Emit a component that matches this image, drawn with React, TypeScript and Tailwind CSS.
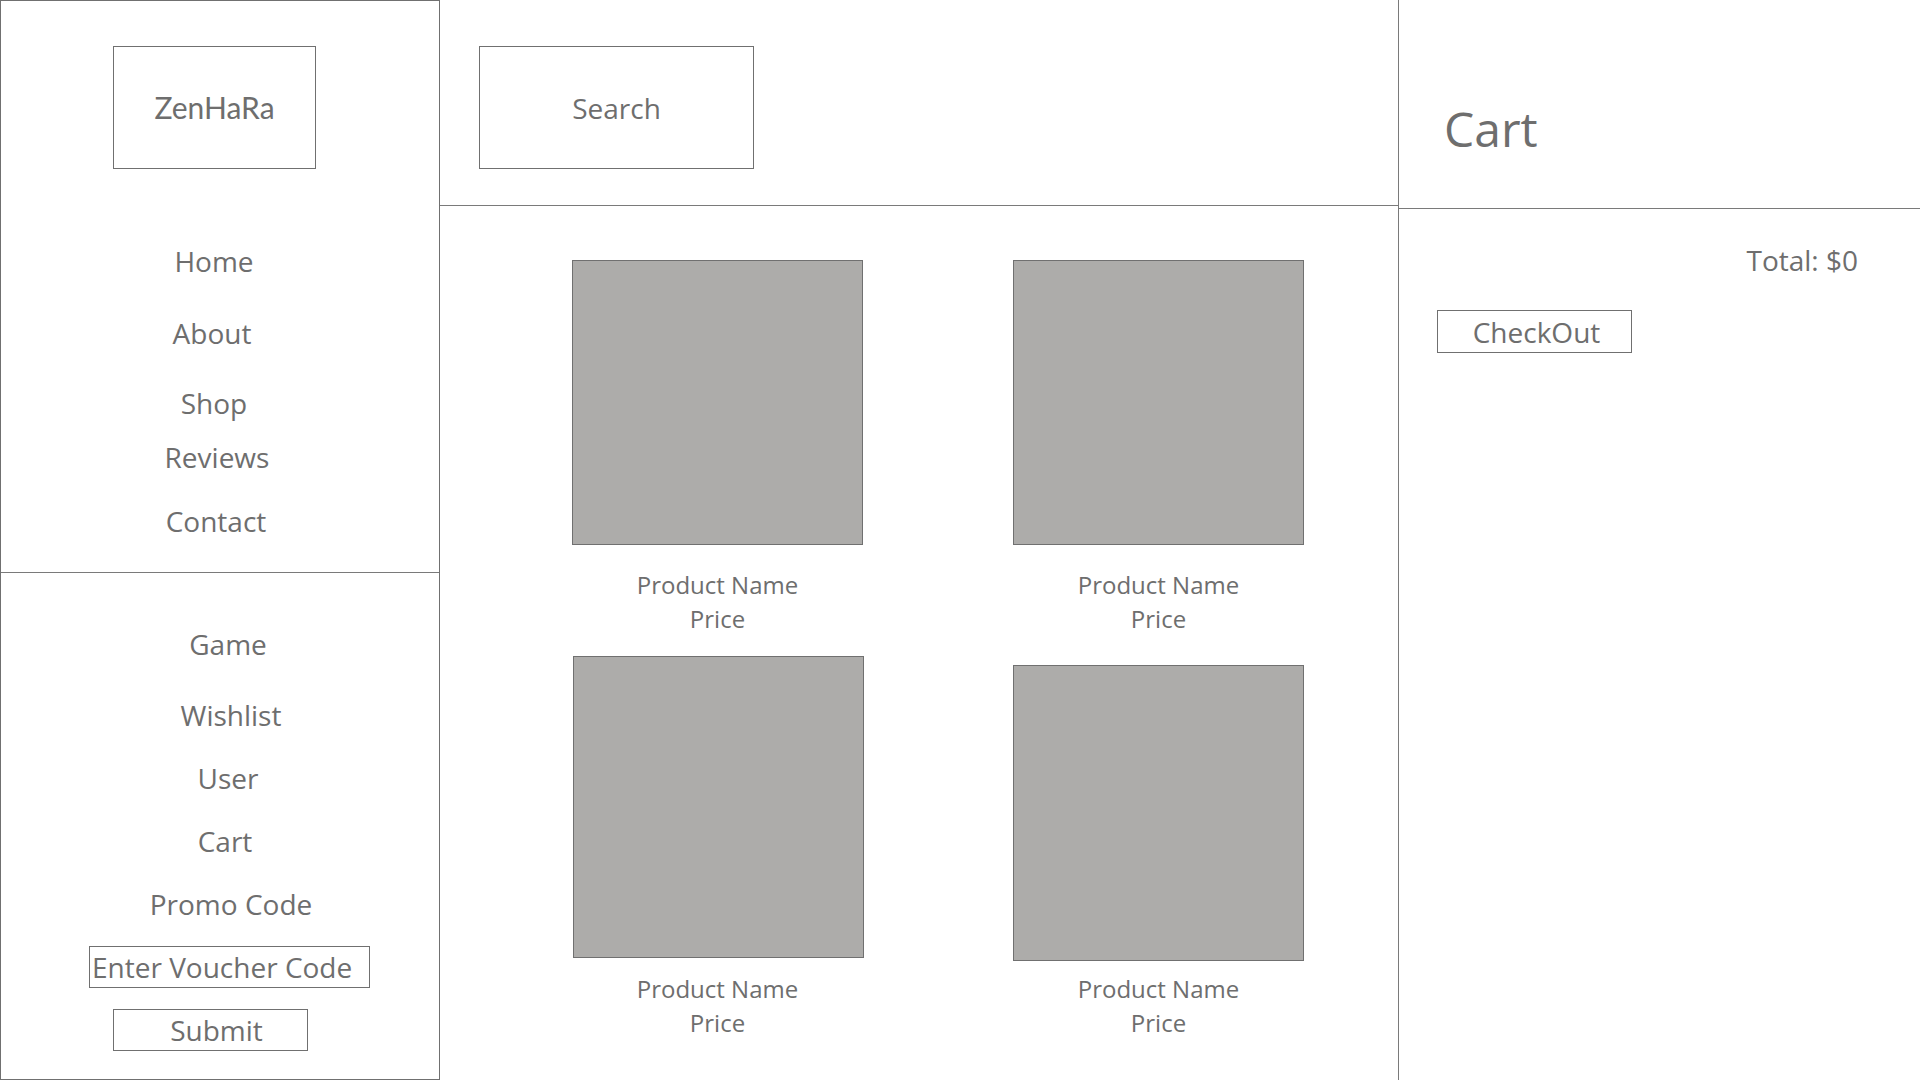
import React from 'react';

const topNav = [
  { label: 'Home', cls: 'mt-[72px] pr-[12px]' },
  { label: 'About', cls: 'mt-[32px] pr-[16px]' },
  { label: 'Shop', cls: 'mt-[30px] pr-[12px]' },
  { label: 'Reviews', cls: 'mt-[14px] pr-[6px]' },
  { label: 'Contact', cls: 'mt-[24px] pr-[8px]' },
];

const bottomNav = [
  { label: 'Game', cls: 'mt-[51px] pl-[16px]' },
  { label: 'Wishlist', cls: 'mt-[31px] pl-[22px]' },
  { label: 'User', cls: 'mt-[23px] pl-[16px]' },
  { label: 'Cart', cls: 'mt-[23px] pl-[10px]' },
  { label: 'Promo Code', cls: 'mt-[23px] pl-[22px]' },
];

const products = [
  { id: 1, box: 'w-[291px] h-[285px]', text: 'mt-[23px]' },
  { id: 2, box: 'w-[291px] h-[285px]', text: 'mt-[23px]' },
  { id: 3, box: 'w-[291px] h-[302px] ml-[1px]', text: 'mt-[14px]' },
  { id: 4, box: 'w-[291px] h-[296px] mt-[9px]', text: 'mt-[11px]' },
];

function Sidebar() {
  return (
    <aside className="w-[440px] h-full shrink-0 flex flex-col border border-[#707070]">
      {/* Brand + main links */}
      <div className="h-[572px] shrink-0 flex flex-col border-b border-[#7a7a7a]">
        <div className="mt-[45px] ml-[112px] w-[203px] h-[123px] border border-[#707070] flex items-center justify-center font-['Lato',sans-serif] text-[30px] text-[#6e6e6e]">
          ZenHaRa
        </div>
        {topNav.map((item) => (
          <a key={item.label} className={`block h-[40px] leading-[40px] text-center text-[28px] ${item.cls}`}>
            {item.label}
          </a>
        ))}
      </div>

      {/* Account links + voucher */}
      <div className="flex-1 flex flex-col">
        {bottomNav.map((item) => (
          <a key={item.label} className={`block h-[40px] leading-[40px] text-center text-[28px] ${item.cls}`}>
            {item.label}
          </a>
        ))}
        <input
          type="text"
          placeholder="Enter Voucher Code"
          className="mt-[22px] ml-[88px] w-[281px] h-[42px] border border-[#707070] pl-[2px] text-[28px] leading-[40px] text-[#6e6e6e] placeholder:text-[#6e6e6e] outline-none"
        />
        <button className="mt-[21px] ml-[112px] w-[195px] h-[42px] border border-[#707070] pl-[12px] text-[28px] leading-[40px] text-[#6e6e6e]">
          Submit
        </button>
      </div>
    </aside>
  );
}

function ProductCard({ box, text }: { box: string; text: string }) {
  return (
    <div className="flex flex-col items-start">
      <div className={`bg-[#adacaa] border border-[#707070] ${box}`} />
      <div className={`w-[291px] text-center text-[24px] leading-[34px] ${text}`}>
        <div>Product Name</div>
        <div>Price</div>
      </div>
    </div>
  );
}

function Catalog() {
  return (
    <main className="w-[958px] h-full shrink-0 flex flex-col">
      <div className="h-[206px] shrink-0 border-b border-[#7a7a7a] pt-[46px] pl-[39px]">
        <div className="w-[275px] h-[123px] border border-[#707070] flex items-center justify-center text-[28px]">
          Search
        </div>
      </div>
      <div className="grid grid-cols-[291px_291px] gap-x-[150px] gap-y-[20px] pl-[132px] pt-[54px]">
        {products.map((p) => (
          <ProductCard key={p.id} box={p.box} text={p.text} />
        ))}
      </div>
    </main>
  );
}

function CartPanel() {
  return (
    <section className="flex-1 h-full flex flex-col border-l border-[#7a7a7a]">
      <div className="h-[209px] shrink-0 border-b border-[#7a7a7a] pt-[101px] pl-[45px]">
        <h1 className="text-[48px] leading-[56px]">Cart</h1>
      </div>
      <div className="mt-[31px] pr-[62px] text-right text-[28px] leading-[40px]">Total: $0</div>
      <button className="mt-[30px] ml-[38px] w-[195px] h-[43px] border border-[#707070] pl-[4px] text-[28px] leading-[40px] text-[#6e6e6e]">
        CheckOut
      </button>
    </section>
  );
}

export default function App() {
  return (
    <div className="w-[1920px] h-[1080px] flex bg-white overflow-hidden font-['Open_Sans',sans-serif] text-[#6e6e6e]">
      <Sidebar />
      <Catalog />
      <CartPanel />
    </div>
  );
}
